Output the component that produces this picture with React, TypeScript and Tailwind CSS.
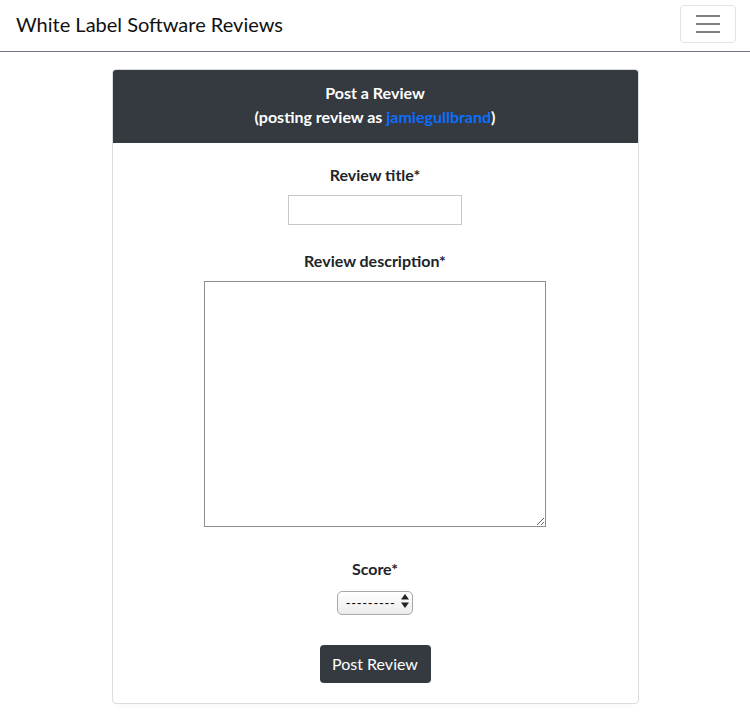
import React from "react";

const App: React.FC = () => {
  return (
    <div className="min-h-[718px] bg-white font-['Lato','Noto_Sans',sans-serif] text-[#212529]">
      {/* Navbar */}
      <nav className="flex h-[52px] items-center justify-between border-b border-[#6c757d] pb-[3px] pl-4 pr-[14px]">
        <span className="text-[20px] leading-none text-[#111]">White Label Software Reviews</span>
        <button className="flex h-[38px] w-[56px] flex-col items-center justify-center gap-[6px] rounded-[4px] border border-[#e3e3e3]">
          <span className="block h-[2px] w-6 bg-[#808080]" />
          <span className="block h-[2px] w-6 bg-[#808080]" />
          <span className="block h-[2px] w-6 bg-[#808080]" />
        </button>
      </nav>

      {/* Card */}
      <div className="mx-auto mt-[17px] w-[527px] overflow-hidden rounded-[4px] border border-[#dcdcdc] shadow-[0_6px_8px_-6px_rgba(0,0,0,0.06)]">
        <div className="flex h-[73px] flex-col items-center justify-center bg-[#343a40] pb-1 text-[16px] font-bold leading-6 text-white">
          <div>Post a Review</div>
          <div>
            (posting review as <a className="text-[#0d6efd]">jamiegullbrand</a>)
          </div>
        </div>

        <form className="flex flex-col items-center px-4 pb-5 pt-5">
          <label className="text-[16px] font-bold leading-6">Review title*</label>
          <input type="text" className="mt-2 h-[30px] w-[174px] border border-[#c8c8c8] outline-none" />

          <label className="mt-6 text-[16px] font-bold leading-6">Review description*</label>
          <textarea className="mt-2 block h-[246px] w-[342px] resize border border-[#8e8e8e] outline-none" />

          <label className="mt-[30px] text-[16px] font-bold leading-6">Score*</label>
          <div className="relative mt-2 h-[24px] w-[76px]">
            <select className="h-full w-full appearance-none rounded-[5px] border border-[#a8a8a8] bg-gradient-to-b from-white to-[#ececec] pl-[8px] font-['Liberation_Sans',sans-serif] text-[13px] leading-none tracking-[1.2px] text-black outline-none">
              <option>---------</option>
            </select>
            <svg className="pointer-events-none absolute right-[4px] top-[5px]" width="8" height="14" viewBox="0 0 8 14">
              <path d="M4 0 L8 5.5 L0 5.5 Z" fill="#222" />
              <path d="M4 14 L8 8.5 L0 8.5 Z" fill="#222" />
            </svg>
          </div>

          <button type="button" className="mt-8 h-[38px] w-[111px] rounded-[4px] bg-[#343a40] text-[16px] text-white">
            Post Review
          </button>
        </form>
      </div>
    </div>
  );
};

export default App;
